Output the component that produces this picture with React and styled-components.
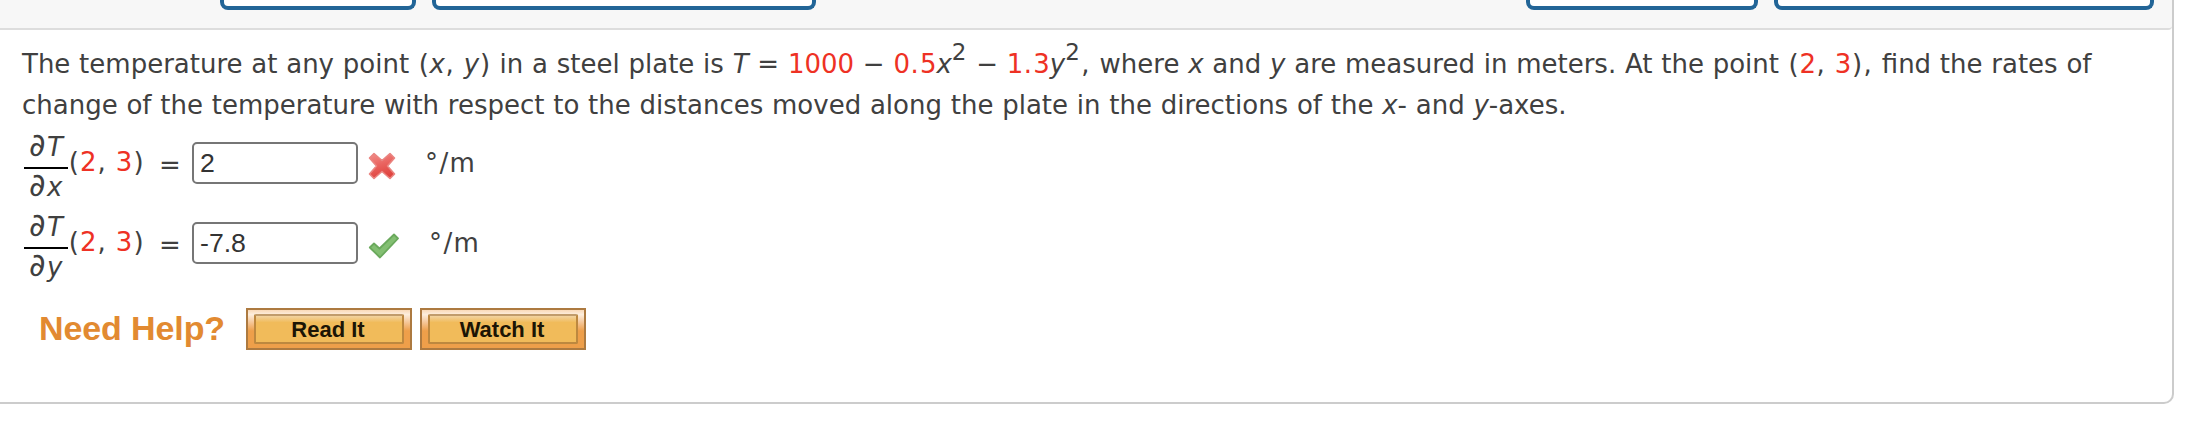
import React from 'react'
import styled, { createGlobalStyle } from 'styled-components'

const GlobalStyle = createGlobalStyle`
    body {
        margin: 0;
        background-color: #ffffff;
    }

    * {
        box-sizing: border-box;
    }
`

const WrongIcon = () => (
    <svg width="28" height="28" viewBox="0 0 28 28">
        <defs>
            <linearGradient id="wrong" x1="0" y1="0" x2="0.3" y2="1">
                <stop offset="0" stopColor="#f18f8b" />
                <stop offset="0.5" stopColor="#ea6561" />
                <stop offset="1" stopColor="#e0443f" />
            </linearGradient>
        </defs>
        <path
            d="M6 1.5 L14 8.5 L22 1.5 L26.5 6 L19.5 14 L26.5 22 L22 26.5 L14 19.5 L6 26.5 L1.5 22 L8.5 14 L1.5 6 Z"
            fill="url(#wrong)" stroke="#ea8480" strokeWidth="1.6" strokeLinejoin="round"
        />
    </svg>
)

const RightIcon = () => (
    <svg width="32" height="28" viewBox="0 0 32 28">
        <path
            d="M1.8 15.5 L6 11.5 L11.5 16.5 L26 2.5 L30 6.5 L12 25.5 Z"
            fill="#83bf72" stroke="#6aa95c" strokeWidth="1.8" strokeLinejoin="round"
        />
    </svg>
)

const Coordinates = ({ first, second }) => (
    <>
        <Paren>(</Paren>{first}<Comma>,</Comma> {second}<Paren>)</Paren>
    </>
)

const AnswerRow = ({ variable, value, correct }) => (
    <StyledRow>
        <Fraction>
            <div><Partial>∂</Partial><i>T</i></div>
            <div><Partial>∂</Partial><i>{variable}</i></div>
        </Fraction>
        <Point>
            <Coordinates first={<Red>2</Red>} second={<Red>3</Red>} />
        </Point>
        <Equals>=</Equals>
        <AnswerInput defaultValue={value} />
        <Mark $width={correct ? '61px' : '57px'}>
            {correct ? <RightIcon /> : <WrongIcon />}
        </Mark>
        <Unit>°/m</Unit>
    </StyledRow>
)

const App = () => {
    return (
        <>
            <GlobalStyle />
            <Panel>
                <Header>
                    <ButtonGroup>
                        <HeaderButton $width="196px" />
                        <HeaderButton $width="384px" />
                    </ButtonGroup>
                    <ButtonGroup>
                        <HeaderButton $width="232px" />
                        <HeaderButton $width="380px" />
                    </ButtonGroup>
                </Header>

                <Question>
                    <Line>
                        The temperature at any point <Coordinates first={<i>x</i>} second={<i>y</i>} /> in a steel plate is <i>T</i> = <Red>1000</Red> − <Red>0<Comma>.</Comma>5</Red><i>x</i><sup>2</sup> − <Red>1<Comma>.</Comma>3</Red><i>y</i><sup>2</sup><Comma>,</Comma> where <i>x</i> and <i>y</i> are measured in meters. At the point <Coordinates first={<Red>2</Red>} second={<Red>3</Red>} /><Comma>,</Comma> find the rates of
                    </Line>
                    <Line>
                        change of the temperature with respect to the distances moved along the plate in the directions of the <i>x</i>- and <i>y</i>-axes.
                    </Line>

                    <Answers>
                        <AnswerRow variable="x" value="2" />
                        <AnswerRow variable="y" value="-7.8" correct />
                    </Answers>

                    <Help>
                        <h3>Need Help?</h3>
                        <HelpButton><span>Read It</span></HelpButton>
                        <HelpButton><span>Watch It</span></HelpButton>
                    </Help>
                </Question>
            </Panel>
        </>
    )
}

const Panel = styled.div`
    width: 2174px;
    height: 404px;
    border: 2px solid #cccccc;
    border-top: none;
    border-left: none;
    border-radius: 0 0 10px 0;
    font-family: Verdana, "DejaVu Sans", sans-serif;
    color: #404040;
`

const Header = styled.div`
    display: flex;
    justify-content: space-between;
    height: 30px;
    padding: 0 18px 0 220px;
    background-color: #f7f7f7;
    border-bottom: 2px solid #dddddd;
    border-radius: 0 0 4px 0;
`

const ButtonGroup = styled.div`
    display: flex;
    gap: 16px;
`

const HeaderButton = styled.button`
    width: ${({ $width }) => $width};
    height: 10px;
    padding: 0;
    background-color: #ffffff;
    border: 4px solid #226597;
    border-top: none;
    border-radius: 0 0 8px 8px;
`

const Question = styled.div`
    display: flex;
    flex-direction: column;
    padding: 14px 0 0 22px;
`

const Line = styled.p`
    margin: 0;
    height: 41px;
    font-size: 26px;
    line-height: 41px;
    word-spacing: 0.5px;
    white-space: nowrap;

    sup {
        margin-right: 1px;
        font-size: 23px;
        line-height: 0;
        vertical-align: 13px;
    }
`

const Red = styled.span`
    color: #ee3124;
`

const Paren = styled.span`
    padding: 0 0.8px;
`

const Comma = styled.span`
    padding: 0 1.2px 0 0.5px;
`

const Answers = styled.div`
    margin-top: -3px;
`

const StyledRow = styled.div`
    display: flex;
    align-items: center;
    height: 80px;
    margin-left: 2px;
    font-size: 26px;
`

const Fraction = styled.div`
    display: flex;
    flex-direction: column;
    width: 44px;
    padding-top: 12px;

    div {
        height: 40px;
        padding-left: 5px;
        line-height: 36px;
        white-space: nowrap;
    }

    div:first-child {
        border-bottom: 2px solid #000000;
        line-height: 32px;
    }
`

const Partial = styled.span`
    display: inline-block;
    width: 18px;
    font-size: 32px;
    line-height: 1;
`

const Point = styled.div`
    width: 91px;
    padding: 0 0 2px 0;
    letter-spacing: 0.3px;
    white-space: nowrap;
`

const Equals = styled.div`
    width: 33px;
    padding-top: 3px;
`

const AnswerInput = styled.input`
    width: 166px;
    height: 42px;
    margin: 0;
    padding: 2px 6px;
    border: 2px solid #767676;
    border-radius: 5px;
    background-color: #ffffff;
    color: #333333;
    font-family: "Liberation Sans", Arial, sans-serif;
    font-size: 26.67px;
`

const Mark = styled.div`
    display: flex;
    width: ${({ $width }) => $width};
    margin-left: 10px;
    padding-top: 5px;
`

const Unit = styled.div`
    letter-spacing: 1.4px;
    white-space: nowrap;
`

const Help = styled.div`
    display: flex;
    align-items: center;
    height: 42px;
    margin: 25px 0 0 17px;
    font-family: "Liberation Sans", Arial, sans-serif;

    h3 {
        width: 207px;
        margin: 0;
        padding-bottom: 2px;
        font-size: 34px;
        font-weight: bold;
        letter-spacing: -0.1px;
        color: #e28a31;
    }
`

const HelpButton = styled.button`
    width: 166px;
    height: 42px;
    margin-right: 8px;
    padding: 4px 6px;
    border: 2px solid #ad7a40;
    background: linear-gradient(#f9d9b8, #fdeedd 12%, #f6cba0 30%, #ee9f4a 55%, #ee9f4a);
    font-family: inherit;

    span {
        display: block;
        height: 30px;
        padding-right: 2px;
        border: 2px solid #bd883f;
        border-top-color: #c19c6c;
        border-radius: 2px;
        background: linear-gradient(#f2d3a0, #f1bb5a 25%, #f1bb5a);
        font-size: 22px;
        line-height: 28px;
        font-weight: bold;
        color: #1c1505;
    }
`

export default App
